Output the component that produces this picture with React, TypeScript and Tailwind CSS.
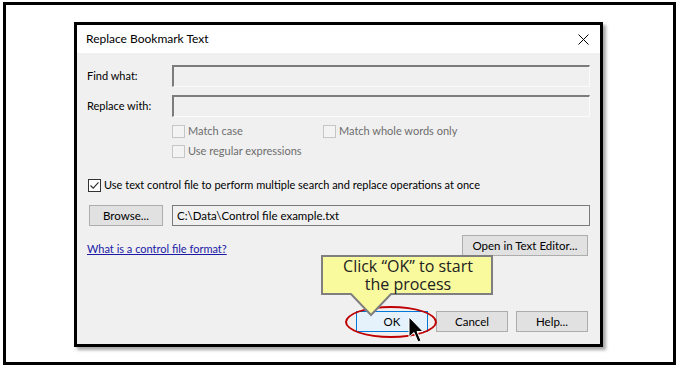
import React from "react";

function Checkbox({ checked, disabled }: { checked?: boolean; disabled?: boolean }) {
  return (
    <span
      className={`flex h-[13px] w-[13px] shrink-0 items-center justify-center border ${
        disabled ? "border-[#c6c6c6] bg-[#f3f3f3]" : "border-[#333333] bg-white"
      }`}
    >
      {checked ? (
        <svg width="11" height="11" viewBox="0 0 11 11">
          <path d="M1.5 5.5 L4.2 8.2 L9.5 2.3" fill="none" stroke="#333" strokeWidth="1.2" />
        </svg>
      ) : null}
    </span>
  );
}

function SunkenInput() {
  return (
    <div className="h-[22px] flex-1 border-t-2 border-l-2 border-b border-r border-t-[#7c7c7c] border-l-[#7c7c7c] border-b-[#fbfbfb] border-r-[#fbfbfb] bg-[#f0f0f0]" />
  );
}

function Btn({ children, primary }: { children: React.ReactNode; primary?: boolean }) {
  return (
    <button
      className={`flex h-[21px] w-full items-center justify-center border text-[11.5px] ${
        primary ? "border-[#0078d7] bg-[#e5f1fb]" : "border-[#adadad] bg-[#e1e1e1]"
      }`}
    >
      {children}
    </button>
  );
}

export default function App() {
  return (
    <div className="h-[366px] w-[679px] overflow-hidden bg-white pl-[3px] pt-[2px]">
      <div className="relative h-[363px] w-[673px] border-[3px] border-black bg-white pl-[68px] pt-[17px]">
        {/* dialog */}
        <div
          className="flex h-[325px] w-[529px] flex-col border-[3px] border-black bg-[#f0f0f0] text-[11px] text-black shadow-[3px_3px_3px_rgba(0,0,0,0.35)]"
          style={{ fontFamily: '"Segoe UI", Lato, sans-serif' }}
        >
          <div className="flex h-[28px] shrink-0 items-center justify-between bg-white pl-[9px] pr-[11px]">
            <span className="text-[12px]">Replace Bookmark Text</span>
            <svg width="11" height="11" viewBox="0 0 11 11">
              <path d="M0.5 0.5 L10.5 10.5 M10.5 0.5 L0.5 10.5" stroke="#000" strokeWidth="1" />
            </svg>
          </div>

          <div className="flex flex-1 flex-col px-[10px] pb-[12px] pt-[12px]">
            <div className="flex h-[22px] items-center">
              <span className="w-[85px]">Find what:</span>
              <SunkenInput />
            </div>
            <div className="mt-[8px] flex h-[22px] items-center">
              <span className="w-[85px]">Replace with:</span>
              <SunkenInput />
            </div>

            <div className="mt-[8px] grid grid-cols-[151px_1fr] gap-y-[7px] pl-[85px] text-[#6d6d6d]">
              <label className="flex h-[13px] items-center gap-[3px]">
                <Checkbox disabled />
                <span>Match case</span>
              </label>
              <label className="flex h-[13px] items-center gap-[3px]">
                <Checkbox disabled />
                <span>Match whole words only</span>
              </label>
              <label className="flex h-[13px] items-center gap-[3px]">
                <Checkbox disabled />
                <span>Use regular expressions</span>
              </label>
            </div>

            <label className="ml-[1px] mt-[21px] flex h-[13px] items-center gap-[3px]">
              <Checkbox checked />
              <span>Use text control file to perform multiple search and replace operations at once</span>
            </label>

            <div className="mt-[13px] flex h-[21px] items-stretch gap-[9px] pl-[2px]">
              <div className="w-[74px]">
                <Btn>Browse...</Btn>
              </div>
              <div className="flex flex-1 items-center border border-[#7a7a7a] bg-[#f0f0f0] pl-[4px] text-[11.5px]">
                C:\Data\Control file example.txt
              </div>
            </div>

            <div className="mt-[9px] flex items-start justify-between pr-[2px]">
              <a className="mt-[6px] text-[#1a1aa6] underline" href="#">
                What is a control file format?
              </a>
              <div className="w-[126px]">
                <Btn>Open in Text Editor...</Btn>
              </div>
            </div>

            <div className="mt-auto flex justify-end gap-[8px] pr-[2px]">
              <div className="w-[72px]">
                <Btn primary>OK</Btn>
              </div>
              <div className="w-[72px]">
                <Btn>Cancel</Btn>
              </div>
              <div className="w-[72px]">
                <Btn>Help...</Btn>
              </div>
            </div>
          </div>
        </div>

        {/* red ellipse around OK */}
        <div className="absolute left-[339px] top-[301px] h-[32px] w-[92px] rounded-[50%] border-[2.5px] border-[#c00000]" />

        {/* callout */}
        <svg className="absolute left-[315px] top-[250px]" width="174" height="64" viewBox="0 0 174 64">
          <path
            d="M1 1 H171 V39 H70 L50 60 L30 39 H1 Z"
            fill="#f9f99d"
            stroke="#7f7f7f"
            strokeWidth="2"
          />
        </svg>
        <p
          className="absolute left-[317px] top-[252px] w-[170px] text-center text-[16px] leading-[18px] text-[#222]"
          style={{ fontFamily: '"Open Sans", sans-serif' }}
        >
          Click “OK” to start
          <br />
          the process
        </p>

        {/* mouse cursor */}
        <svg className="absolute left-[402px] top-[311px]" width="16" height="30" viewBox="0 0 16 30">
          <path
            d="M1 1 L1 21 L6 16.5 L10 26 L13 24.7 L9 15.5 L15 15.5 Z"
            fill="#000"
            stroke="#fff"
            strokeWidth="1"
          />
        </svg>
      </div>
    </div>
  );
}
